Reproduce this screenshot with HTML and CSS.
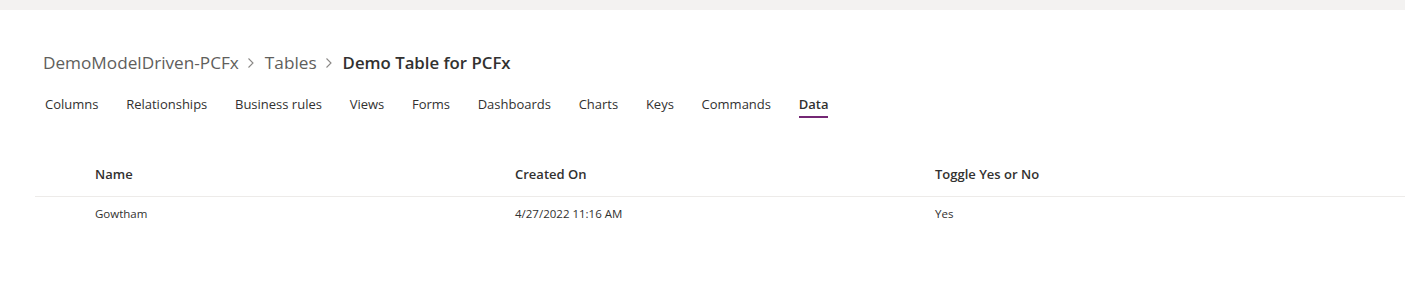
FILE: index.html
```html
<!DOCTYPE html>
<html>
<head>
    <title>Demo Table for PCFx - Data</title>
    <link rel="stylesheet" href="styles.css">
</head>
<body>
    <div class="topbar"></div>
    <div class="page">
        <div class="breadcrumb">
            <span class="crumb">DemoModelDriven-PCFx</span>
            <svg class="chevron" width="8" height="12" viewBox="0 0 8 12"><path d="M1.5 1.5 L6 6 L1.5 10.5" fill="none" stroke="#8a8886" stroke-width="1.1"/></svg>
            <span class="crumb">Tables</span>
            <svg class="chevron" width="8" height="12" viewBox="0 0 8 12"><path d="M1.5 1.5 L6 6 L1.5 10.5" fill="none" stroke="#8a8886" stroke-width="1.1"/></svg>
            <span class="crumb current">Demo Table for PCFx</span>
        </div>
        <div class="tabs">
            <span class="tab">Columns</span>
            <span class="tab">Relationships</span>
            <span class="tab">Business rules</span>
            <span class="tab">Views</span>
            <span class="tab">Forms</span>
            <span class="tab">Dashboards</span>
            <span class="tab">Charts</span>
            <span class="tab">Keys</span>
            <span class="tab">Commands</span>
            <span class="tab active">Data</span>
        </div>
    </div>
    <div class="grid">
        <div class="grid-row header">
            <div class="cell">Name</div>
            <div class="cell">Created On</div>
            <div class="cell">Toggle Yes or No</div>
        </div>
        <div class="grid-row">
            <div class="cell">Gowtham</div>
            <div class="cell">4/27/2022 11:16 AM</div>
            <div class="cell">Yes</div>
        </div>
    </div>
</body>
</html>
```

FILE: styles.css
```css
body { font-family: "Open Sans", "Noto Sans", sans-serif; color: #323130; background: #fff; margin: 0; padding: 0; }
.topbar { height: 10px; background: #f3f2f1; }
.page { padding-left: 43px; }
.breadcrumb { display: flex; align-items: center; margin-top: 40px; height: 24px; font-size: 17.2px; }
.crumb { color: #605e5c; }
.crumb.current { color: #323130; font-weight: 600; font-size: 16.8px; }
.chevron { margin: 1px 10px 0 8px; }
.tabs { display: flex; gap: 27.7px; margin-top: 20px; margin-left: 2px; font-size: 13px; }
.tab { line-height: 20px; padding-bottom: 2px; border-bottom: 2px solid transparent; }
.tab.active { font-weight: 600; border-bottom-color: #742774; }
.grid { margin: 34px 0 0 35px; }
.grid-row { display: grid; grid-template-columns: 420px 420px 420px; padding-left: 60px; }
.grid-row.header { height: 44px; align-items: center; font-size: 13px; font-weight: 600; border-bottom: 1px solid #edebe9; }
.grid-row .cell { white-space: nowrap; }
.grid-row:not(.header) { height: 33px; align-items: center; font-size: 11.5px; }
```
